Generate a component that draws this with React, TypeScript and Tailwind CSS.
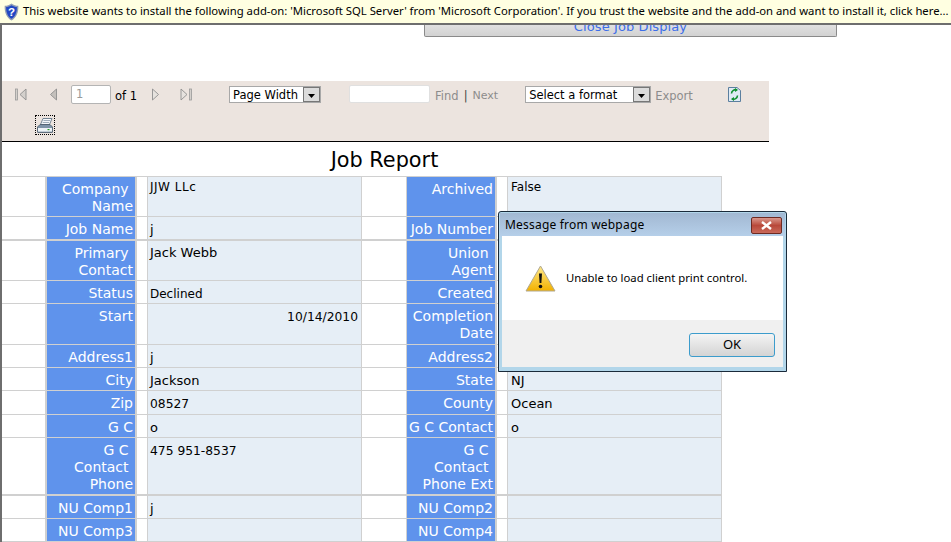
const verdana = 'font-["DejaVu_Sans",sans-serif]';

type RowData = {
  h: string;
  thick?: boolean;
  l1: string[];
  v1: string;
  v1Right?: boolean;
  v1Size?: string;
  l2: string[];
  v2: string;
  v2Size?: string;
};

const nb = '\u00a0';
const small = 'pt-[2px] text-[12px] tracking-[0.5px]';
const digits = 'pt-[5px] text-[12.3px]';

const rows: RowData[] = [
  { h: 'h-[40px]', l1: ['Company' + nb, 'Name'], v1: 'JJW LLc', v1Size: small, l2: ['Archived'], v2: 'False', v2Size: 'pt-[2px] text-[12px]' },
  { h: 'h-[24px]', thick: true, l1: ['Job Name'], v1: 'j', l2: ['Job Number'], v2: '' },
  { h: 'h-[40px]', l1: ['Primary' + nb, 'Contact'], v1: 'Jack Webb', v1Size: 'pt-[3px] text-[13px]', l2: ['Union' + nb, 'Agent'], v2: '' },
  { h: 'h-[23px]', l1: ['Status'], v1: 'Declined', v1Size: 'pt-[5px] text-[12px]', l2: ['Created'], v2: '' },
  { h: 'h-[41px]', l1: ['Start'], v1: '10/14/2010', v1Size: digits, v1Right: true, l2: ['Completion', 'Date'], v2: '' },
  { h: 'h-[23px]', l1: ['Address1'], v1: 'j', l2: ['Address2'], v2: '' },
  { h: 'h-[23px]', l1: ['City'], v1: 'Jackson', l2: ['State'], v2: 'NJ' },
  { h: 'h-[24px]', l1: ['Zip'], v1: '08527', v1Size: digits, l2: ['County'], v2: 'Ocean' },
  { h: 'h-[23px]', l1: ['G C'], v1: 'o', l2: ['G C Contact'], v2: 'o' },
  { h: 'h-[58px]', thick: true, l1: ['G C' + nb, 'Contact' + nb, 'Phone'], v1: '475 951-8537', v1Size: digits, l2: ['G C' + nb, 'Contact' + nb, 'Phone Ext'], v2: '' },
  { h: 'h-[23px]', l1: ['NU Comp1'], v1: 'j', l2: ['NU Comp2'], v2: '' },
  { h: 'h-[23px]', l1: ['NU Comp3'], v1: '', l2: ['NU Comp4'], v2: '' },
];

function Label({ lines }: { lines: string[] }) {
  return (
    <div className="bg-[#5f93ec] border-r-2 border-[#d0d0d0] pt-[4px] pr-[2px] text-right text-[14px] leading-[17px] text-white overflow-hidden whitespace-nowrap">
      {lines.map((t) => (
        <div key={t}>{t}</div>
      ))}
    </div>
  );
}

function Value({ text, right, size, inset }: { text: string; right?: boolean; size?: string; inset?: boolean }) {
  return (
    <div
      className={
        'bg-[#e6eef6] border-r border-[#d0d0d0] pr-[3px] leading-[17px] text-black overflow-hidden ' +
        (inset ? 'pl-[3px] ' : 'pl-[2px] ') +
        (right ? 'text-right ' : '') +
        (size ? size : 'pt-[4px] text-[13px]')
      }
    >
      {text}
    </div>
  );
}

function Row({ r }: { r: RowData }) {
  return (
    <div
      className={
        'grid w-[720px] grid-cols-[45px_90px_11px_214px_45px_90px_11px_214px] border-[#d0d0d0] ' +
        r.h +
        (r.thick ? ' border-b-2' : ' border-b')
      }
    >
      <div className="bg-white border-r-2 border-[#d0d0d0]" />
      <Label lines={r.l1} />
      <div className="bg-white border-r border-[#d0d0d0]" />
      <Value text={r.v1} right={r.v1Right} size={r.v1Size} />
      <div className="bg-white border-r border-[#d0d0d0]" />
      <Label lines={r.l2} />
      <div className="bg-white border-r border-[#d0d0d0]" />
      <Value text={r.v2} size={r.v2Size} inset />
    </div>
  );
}

function NavIcon({ dir, bar }: { dir: 'l' | 'r'; bar?: boolean }) {
  const tri = dir === 'l' ? 'M7.5 1 L1.5 6.5 L7.5 12 Z' : 'M1.5 1 L7.5 6.5 L1.5 12 Z';
  return (
    <svg width={bar ? 12 : 9} height="13" viewBox={bar ? '0 0 12 13' : '0 0 9 13'}>
      {bar ? (
        dir === 'l' ? (
          <>
            <rect x="0.5" y="1" width="2" height="11" fill="#d4d0cc" stroke="#9a9a9a" strokeWidth="0.8" />
            <path d="M11 1 L5 6.5 L11 12 Z" fill="#d4d0cc" stroke="#8f8f8f" strokeWidth="0.9" />
          </>
        ) : (
          <>
            <path d="M1 1 L7 6.5 L1 12 Z" fill="#e6e2de" stroke="#8f8f8f" strokeWidth="0.9" />
            <rect x="9.5" y="1" width="2" height="11" fill="#d4d0cc" stroke="#9a9a9a" strokeWidth="0.8" />
          </>
        )
      ) : (
        <path d={tri} fill={dir === 'l' ? '#c4c0bc' : '#e6e2de'} stroke="#8f8f8f" strokeWidth="0.9" />
      )}
    </svg>
  );
}

function Select({ text, w }: { text: string; w: string }) {
  return (
    <div className={'flex h-[17px] items-center justify-between whitespace-nowrap bg-white border border-[#a8a8a8] pl-[3px] text-[11.5px] text-black ' + w}>
      <span className="mt-[2px]">{text}</span>
      <span className="flex h-full w-[17px] shrink-0 items-center justify-center border border-[#777] bg-[#dcdcdc]">
        <svg width="8" height="5" viewBox="0 0 8 5" className="mt-[3px]">
          <path d="M0 0 H7 L3.5 4 Z" fill="#000" />
        </svg>
      </span>
    </div>
  );
}

function Shield() {
  return (
    <svg width="15" height="18" viewBox="0 0 15 18" className="shrink-0">
      <path d="M7.5 0.5 C9.5 2 12 2.8 14.3 2.8 C14.8 9.5 12.2 15 7.5 17.5 C2.8 15 0.2 9.5 0.7 2.8 C3 2.8 5.5 2 7.5 0.5 Z" fill="#8f9cb4" />
      <path d="M7.5 2.2 C9.3 3.3 11 3.9 12.9 4 C13 9.5 11 13.8 7.5 15.8 C4 13.8 2 9.5 2.1 4 C4 3.9 5.7 3.3 7.5 2.2 Z" fill="#2248c4" />
      <text x="7.5" y="13.2" textAnchor="middle" fontSize="11.5" fontWeight="700" fontFamily="Liberation Sans" fill="#fff">?</text>
    </svg>
  );
}

function Printer() {
  return (
    <svg width="16" height="15" viewBox="0 0 16 15" className="shrink-0">
      <path d="M6 0.5 H15 L12.5 6.5 H3.5 Z" fill="#f4f7fa" stroke="#66788a" strokeWidth="0.9" />
      <path d="M6.5 2.5 H13 M5.7 4.5 H12" stroke="#8a9aab" strokeWidth="0.8" />
      <path d="M3 6.5 H13 L15.5 9 V14 Q15.5 14.5 15 14.5 H1 Q0.5 14.5 0.5 14 V9 Z" fill="#7e93a8" stroke="#4a5a6a" strokeWidth="0.8" />
      <rect x="1" y="10" width="14" height="3.6" fill="#edf2f6" />
      <rect x="10.5" y="11" width="2" height="1.2" fill="#2ca02c" />
    </svg>
  );
}

function Refresh() {
  return (
    <svg width="13" height="15" viewBox="0 0 13 15">
      <path d="M0.5 0.5 H9 L12.5 3.5 V14.5 H0.5 Z" fill="#dfeaf4" stroke="#5b7f9f" />
      <path d="M9 3 A4 4 0 0 0 3.5 6.5 M4 12 A4 4 0 0 0 9.5 8.5" fill="none" stroke="#0f8f2f" strokeWidth="1.6" />
      <path d="M7 1 L10 3 L7 5 Z M6 10 L3 12 L6 14 Z" fill="#0f8f2f" />
    </svg>
  );
}

function Warning() {
  return (
    <svg width="31" height="28" viewBox="0 0 31 28" className="shrink-0">
      <defs>
        <linearGradient id="warn" x1="0" y1="0" x2="0" y2="1">
          <stop offset="0" stopColor="#ffe98a" />
          <stop offset="1" stopColor="#f2b100" />
        </linearGradient>
      </defs>
      <path d="M15.5 1 L30 26 H1 Z" fill="url(#warn)" stroke="#b0a890" strokeLinejoin="round" />
      <path d="M14 8.5 H17 L16.4 18 H14.6 Z" fill="#111" />
      <circle cx="15.5" cy="21.5" r="1.8" fill="#111" />
    </svg>
  );
}

function Dialog() {
  return (
    <div className="absolute left-[498px] top-[211px] h-[161px] w-[289px] rounded-t-[3px] border border-[#1a2a3a] bg-[#b2d6ea] p-[1px] pb-[4px]">
      <div className="flex h-[24px] items-center justify-between pl-[5px] pr-[3px] bg-gradient-to-b from-[#a2b8d2] to-[#b6d0ea]">
        <span className={'text-[12px] text-black tracking-[0.2px] font-["Noto_Sans",sans-serif]'}>Message from webpage</span>
        <span className="flex h-[17px] w-[31px] items-center justify-center rounded-[2px] border border-[#6e2a22] bg-gradient-to-b from-[#d9968c] via-[#b8483a] to-[#c9695a]">
          <svg width="13" height="9" viewBox="0 0 13 9">
            <path d="M2 1 L11 8 M11 1 L2 8" stroke="#fff" strokeWidth="2.4" />
          </svg>
        </span>
      </div>
      <div className="mx-[2px] flex h-[84px] items-start bg-white pl-[23px] pt-[29px] -mt-px">
        <Warning />
        <span className={'ml-[10px] mt-[5px] whitespace-nowrap text-[11.3px] text-black font-["Noto_Sans",sans-serif]'}>Unable to load client print control.</span>
      </div>
      <div className="mx-[2px] flex h-[47px] items-start justify-end bg-[#f0f0f0] pr-[8px] pt-[13px]">
        <div className={'flex h-[24px] w-[86px] items-center justify-center rounded-[3px] border border-[#3c9ccc] bg-gradient-to-b from-[#f4f4f4] to-[#d4d4d4] text-[13px] text-black font-["Noto_Sans",sans-serif]'}>
          OK
        </div>
      </div>
    </div>
  );
}

export default function App() {
  return (
    <div className={'relative h-[542px] w-[951px] overflow-hidden bg-white ' + verdana}>
      {/* info bar */}
      <div className="relative z-10 flex h-[25px] items-center overflow-hidden border-b-2 border-[#6e6e6e] bg-[#ffffe1] pl-[4px] text-[11.3px] text-black font-['Noto_Sans',sans-serif]">
        <Shield />
        <span className="ml-[4px] whitespace-nowrap">
          This website wants to install the following add-on: 'Microsoft SQL Server' from 'Microsoft Corporation'. If you trust the website and the add-on and want to install it, click here...
        </span>
      </div>

      <div className="flex h-[517px] flex-col border-l-2 border-[#6e6e6e]">
        {/* close button, half hidden by the bar */}
        <div className="-mt-[12px] ml-[422px] flex h-[24px] w-[413px] shrink-0 items-end justify-center rounded-b-[2px] border-x border-b border-[#8a8a8a] bg-gradient-to-b from-[#f0f0f0] to-[#d2d2d2] pb-[1px] text-[13px] leading-[17px] tracking-[0.1px] text-[#3c6ee8]">
          Close Job Display
        </div>

        {/* report toolbar */}
        <div className="mt-[44px] h-[60px] w-[767px] shrink-0 bg-[#ece4df] text-[11.5px] text-[#8c8c8c]">
          <div className="flex h-[34px] items-start pt-[4px]">
            <div className="ml-[13px] mt-[3px]"><NavIcon dir="l" bar /></div>
            <div className="ml-[22px] mt-[3px]"><NavIcon dir="l" /></div>
            <div className="ml-[13px] flex h-[19px] w-[40px] items-center rounded-[2px] border border-[#b4b4b4] bg-white pl-[4px] text-[#999]">1</div>
            <span className="ml-[4px] mt-[3px] text-black">of 1</span>
            <div className="ml-[14px] mt-[3px]"><NavIcon dir="r" /></div>
            <div className="ml-[20px] mt-[3px]"><NavIcon dir="r" bar /></div>
            <div className="ml-[37px] mt-[1px]"><Select text="Page Width" w="w-[92px]" /></div>
            <div className="ml-[28px] h-[18px] w-[81px] rounded-[2px] border border-[#e0e0e0] bg-white" />
            <span className="ml-[5px] mt-[3px]">Find</span>
            <span className="ml-[5px] mt-[3px] text-[#444]">|</span>
            <span className="ml-[5px] mt-[3px] text-[11px]">Next</span>
            <div className="ml-[27px] mt-[1px]"><Select text="Select a format" w="w-[126px]" /></div>
            <span className="ml-[4px] mt-[3px]">Export</span>
            <div className="ml-[35px] mt-[2px]"><Refresh /></div>
          </div>
          <div className="ml-[33px] flex h-[20px] w-[20px] items-center justify-center border border-dotted border-black">
            <Printer />
          </div>
        </div>

        {/* report body */}
        <div className="w-[767px] shrink-0 border-t border-black pr-[2px] pt-[3px] text-center text-[20.8px] leading-[30px] text-black">Job Report</div>
        <div className="mt-[1px] w-[720px] border-t border-[#d0d0d0]">
          {rows.map((r, i) => (
            <Row key={i} r={r} />
          ))}
        </div>
      </div>

      <Dialog />
    </div>
  );
}
